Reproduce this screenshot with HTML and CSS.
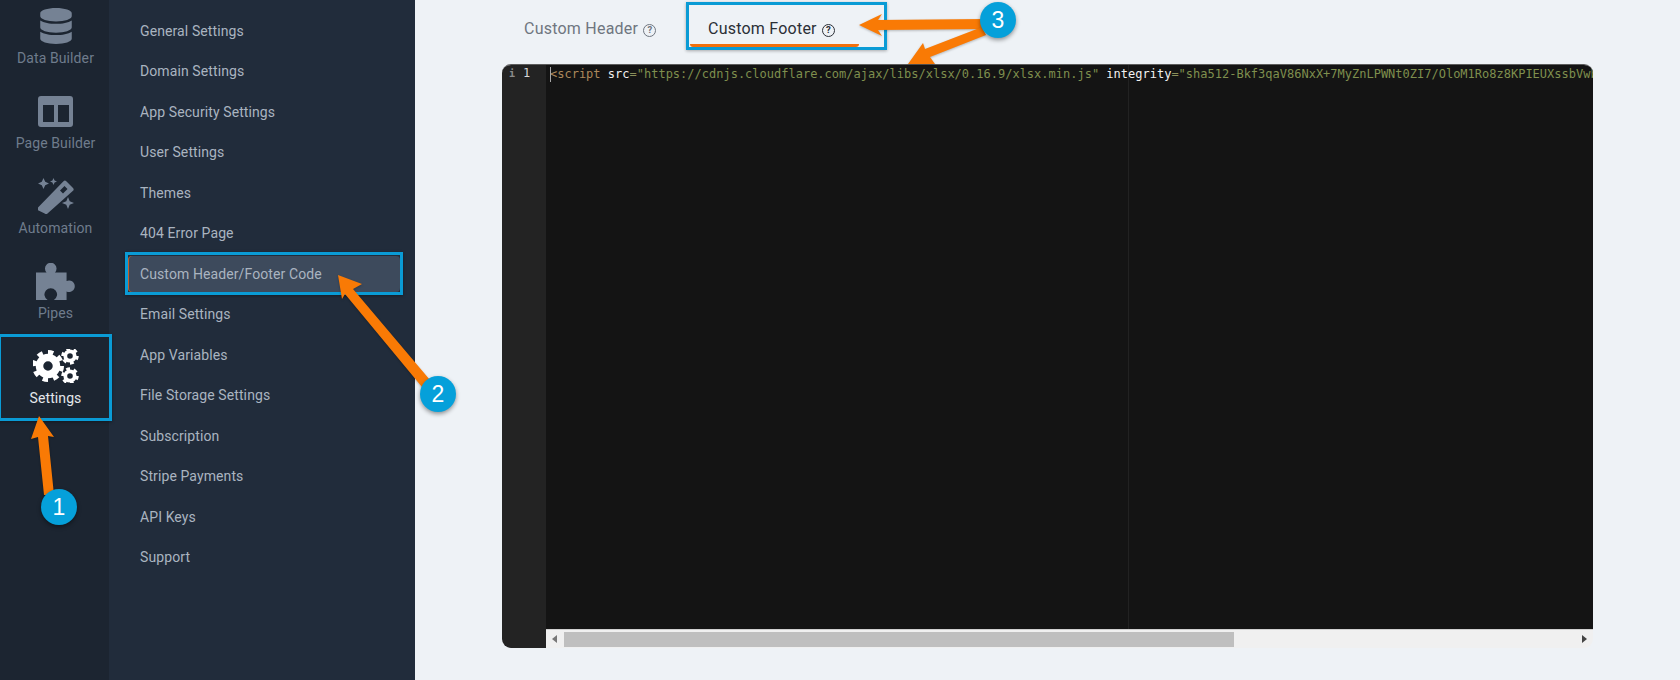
FILE: index.html
```html
<!DOCTYPE html>
<html lang="en">
<head>
<meta charset="utf-8">
<title>Custom Header/Footer Code</title>
<link rel="stylesheet" href="styles.css">
</head>
<body>
<div class="app">
  <nav class="rail">
    <div class="rail-item">
      <div class="rail-icon">
        <svg class="ic-data" viewBox="0 0 448 512"><path d="M448 73.143v45.714C448 159.143 347.667 192 224 192S0 159.143 0 118.857V73.143C0 32.857 100.333 0 224 0s224 32.857 224 73.143zM448 176v102.857C448 319.143 347.667 352 224 352S0 319.143 0 278.857V176c48.125 33.143 136.208 48.572 224 48.572S399.874 209.143 448 176zm0 160v102.857C448 479.143 347.667 512 224 512S0 479.143 0 438.857V336c48.125 33.143 136.208 48.572 224 48.572S399.874 369.143 448 336z"/></svg>
      </div>
      <span class="rail-label">Data Builder</span>
    </div>
    <div class="rail-item">
      <div class="rail-icon">
        <svg class="ic-cols" viewBox="0 0 35 31"><path fill-rule="evenodd" d="M3 0H32A3 3 0 0 1 35 3V28A3 3 0 0 1 32 31H3A3 3 0 0 1 0 28V3A3 3 0 0 1 3 0ZM5 9V26H16V9ZM20 9V26H31V9Z"/></svg>
      </div>
      <span class="rail-label">Page Builder</span>
    </div>
    <div class="rail-item">
      <div class="rail-icon">
        <svg class="ic-wand" viewBox="0 0 36 36"><path fill-rule="evenodd" d="M0 29.500 25.500 3.200a2 2 0 0 1 2.800 0L35 10a2 2 0 0 1 0 2.800L9.500 35.500a2 2 0 0 1-2.800 0L0 32.300a2 2 0 0 1 0-2.800ZM22 12.500 25 15.500 29.500 11 26.500 8Z"/><path d="M5.500 0 7.200 3.800 11 5.500 7.200 7.200 5.500 11 3.800 7.200 0 5.500 3.800 3.800ZM15.500 0 16.600 2.400 19 3.500 16.600 4.600 15.500 7 14.400 4.600 12 3.500 14.400 2.400ZM30 19 31.700 23.300 36 25 31.700 26.700 30 31 28.300 26.700 24 25 28.300 23.300Z"/></svg>
      </div>
      <span class="rail-label">Automation</span>
    </div>
    <div class="rail-item">
      <div class="rail-icon">
        <svg class="ic-puzzle" viewBox="0 0 37 35"><path d="M0 9H10A5.500 5.500 0 1 1 18 9H29V17A5.500 5.500 0 1 1 29 27V35H17A6 6 0 1 0 11 35H0Z"/></svg>
      </div>
      <span class="rail-label">Pipes</span>
    </div>
    <div class="rail-item rail-active">
      <div class="rail-icon">
        <svg class="ic-cogs" viewBox="0 0 46 34">
          <circle class="gear-teeth" cx="15" cy="17" r="13.500" pathLength="48"/>
          <circle class="gear-ring" cx="15" cy="17" r="8.500"/>
          <circle class="gear-teeth-s" cx="37" cy="7" r="7" pathLength="48"/>
          <circle class="gear-ring-s" cx="37" cy="7" r="4.700"/>
          <circle class="gear-teeth-s" cx="37" cy="27" r="7" pathLength="48"/>
          <circle class="gear-ring-s" cx="37" cy="27" r="4.700"/>
        </svg>
      </div>
      <span class="rail-label">Settings</span>
    </div>
  </nav>

  <aside class="menu">
    <a class="menu-item">General Settings</a>
    <a class="menu-item">Domain Settings</a>
    <a class="menu-item">App Security Settings</a>
    <a class="menu-item">User Settings</a>
    <a class="menu-item">Themes</a>
    <a class="menu-item">404 Error Page</a>
    <a class="menu-item menu-active">Custom Header/Footer Code</a>
    <a class="menu-item">Email Settings</a>
    <a class="menu-item">App Variables</a>
    <a class="menu-item">File Storage Settings</a>
    <a class="menu-item">Subscription</a>
    <a class="menu-item">Stripe Payments</a>
    <a class="menu-item">API Keys</a>
    <a class="menu-item">Support</a>
  </aside>

  <main class="main">
    <div class="tabs">
      <div class="tab">Custom Header <span class="help">?</span></div>
      <div class="tab tab-active">Custom Footer <span class="help">?</span></div>
    </div>
    <div class="editor">
      <div class="gutter">
        <span class="info">i</span><span class="line-no">1</span>
      </div>
      <div class="code-wrap">
        <div class="code-area">
          <div class="print-margin"></div>
          <div class="code"><span class="cursor"></span><span class="tk-tag">&lt;script</span> <span class="tk-attr">src</span><span class="tk-eq">=</span><span class="tk-str">"https://cdnjs.cloudflare.com/ajax/libs/xlsx/0.16.9/xlsx.min.js"</span> <span class="tk-attr">integrity</span><span class="tk-eq">=</span><span class="tk-str">"sha512-Bkf3qaV86NxX+7MyZnLPWNt0ZI7/OloM1Ro8z8KPIEUXssbVwb</span></div>
        </div>
        <div class="hscroll">
          <span class="arrow-left"></span>
          <div class="thumb"></div>
          <span class="arrow-right"></span>
        </div>
      </div>
    </div>
  </main>

  <svg class="notes" viewBox="0 0 1680 680" width="1680" height="680">
    <g class="arrow">
      <polygon points="39,416 54,437 48,436 54,495 44,495 38,437 31,439"/>
      <polygon points="338,275 362,284 353,289 430,380 422,387 345,294 342,299"/>
      <polygon points="859,25 882,14 878,20 985,19 985,29 878,30 882,36"/>
      <polygon points="908,64 923,43 925,49 982,27 986,35 930,57 935,64"/>
    </g>
    <g class="badge">
      <circle cx="59" cy="507" r="18"/>
      <text x="59" y="515">1</text>
    </g>
    <g class="badge">
      <circle cx="438" cy="394" r="18"/>
      <text x="438" y="402">2</text>
    </g>
    <g class="badge">
      <circle cx="998" cy="20" r="18"/>
      <text x="998" y="28">3</text>
    </g>
  </svg>
</div>
</body>
</html>
```
FILE: styles.css
```css
*, *::before, *::after { box-sizing: border-box; }
html, body { margin: 0; padding: 0; }
body {
  width: 1680px;
  height: 680px;
  overflow: hidden;
  font-family: Roboto, "Liberation Sans", sans-serif;
  background: #eef2f6;
}
.app {
  position: relative;
  display: flex;
  width: 1680px;
  height: 680px;
  overflow: hidden;
}

/* icon rail */
.rail {
  flex: 0 0 109px;
  background: #1c2531;
  margin-top: -3px;
  height: 683px;
}
.rail-item {
  position: relative;
  height: 85px;
  padding: 9px 0 0 2px;
  display: flex;
  flex-direction: column;
  align-items: center;
  color: #6f7c8c;
}
.rail-icon {
  height: 40px;
  margin-bottom: 4px;
  display: flex;
  align-items: center;
  justify-content: center;
}
.rail-icon svg { display: block; fill: #758294; }
.rail-label { font-size: 14px; line-height: 16px; letter-spacing: 0.1px; }
.ic-data { width: 32px; height: 36px; }
.ic-cols { width: 35px; height: 31px; }
.ic-wand { width: 36px; height: 36px; }
.ic-puzzle { width: 39px; height: 37px; }
.ic-cogs { width: 46px; height: 34px; }

.rail-active { color: #e4e7eb; }
.rail-active::after {
  content: "";
  position: absolute;
  left: -2px;
  top: -3px;
  width: 114px;
  height: 87px;
  border: 3px solid #0a9bd5;
  box-shadow: 0 1px 3px rgba(0, 0, 0, .35);
}
.gear-teeth { fill: none; stroke: #fff; stroke-width: 5; stroke-dasharray: 3 3; }
.gear-ring { fill: none; stroke: #fff; stroke-width: 7.500; }
.gear-teeth-s { fill: none; stroke: #fff; stroke-width: 3.500; stroke-dasharray: 4 4; }
.gear-ring-s { fill: none; stroke: #fff; stroke-width: 3.800; }

/* settings menu */
.menu {
  flex: 0 0 306px;
  background: #212c3b;
  padding-top: 12.500px;
  display: flex;
  flex-direction: column;
  gap: 4px;
}
.menu-item {
  position: relative;
  display: block;
  height: 36.500px;
  line-height: 36.500px;
  margin: 0 15px 0 19px;
  padding-left: 12px;
  font-size: 14px;
  letter-spacing: 0.1px;
  color: #aab4c0;
}
.menu-active {
  background: #3d4a5c;
  border-radius: 4px;
  box-shadow: inset 1px 0 0 #c4622a;
}
.menu-active::after {
  content: "";
  position: absolute;
  left: -3px;
  right: -3px;
  top: -4px;
  bottom: -3px;
  border: 3px solid #0a9bd5;
  box-shadow: 0 1px 3px rgba(0, 0, 0, .35);
}

/* main */
.main {
  flex: 1;
  display: flex;
  flex-direction: column;
  padding-left: 87px;
}
.tabs {
  height: 64px;
  display: flex;
  padding-left: 22px;
}
.tab {
  position: relative;
  font-size: 16px;
  letter-spacing: 0.23px;
  color: #6f7680;
  height: 47px;
  line-height: 58px;
  white-space: nowrap;
  width: 166px;
}
.tab-active {
  color: #2b2f36;
  padding-left: 18px;
  width: 169px;
  border-bottom: 3px solid #f2700c;
  border-radius: 0 0 3px 3px;
}
.tab-active::after {
  content: "";
  position: absolute;
  left: -4px;
  top: 2px;
  width: 201px;
  height: 48px;
  border: 3px solid #0a9bd5;
  box-shadow: 0 1px 3px rgba(0, 0, 0, .3);
}
.help {
  display: inline-block;
  width: 13px;
  height: 13px;
  margin-left: 1px;
  border: 1.500px solid currentColor;
  border-radius: 50%;
  font-size: 9.500px;
  font-weight: 700;
  line-height: 10px;
  letter-spacing: 0;
  text-align: center;
  vertical-align: 1px;
}

/* editor */
.editor {
  width: 1091px;
  height: 584px;
  display: flex;
  border-radius: 9px;
  overflow: hidden;
  border-top: 1px solid #5c5c5c;
}
.gutter {
  flex: 0 0 44px;
  background: #232323;
  display: flex;
  align-items: flex-start;
  padding-top: 1px;
  font-family: "DejaVu Sans Mono", monospace;
  font-size: 12px;
  line-height: 15px;
  color: #d8d8d8;
}
.info {
  width: 12px;
  margin-left: 4px;
  color: #8b8b8b;
  font-weight: 700;
  font-size: 10px;
  text-align: center;
}
.line-no { margin-left: 5px; }
.code-wrap {
  flex: 1;
  min-width: 0;
  display: flex;
  flex-direction: column;
}
.code-area {
  position: relative;
  flex: 1;
  background: #141414;
  overflow: hidden;
  border-bottom: 1px solid #d0d0d0;
}
.print-margin {
  position: absolute;
  left: 582px;
  top: 0;
  bottom: 0;
  width: 1px;
  background: #222;
}
.code {
  position: relative;
  padding: 2px 0 0 4px;
  font-family: "DejaVu Sans Mono", monospace;
  font-size: 12px;
  line-height: 15px;
  white-space: pre;
  color: #d8d8d8;
}
.cursor {
  position: absolute;
  left: 4px;
  top: 2px;
  width: 1px;
  height: 15px;
  background: #a7a7a7;
}
.tk-tag { color: #ac885b; }
.tk-attr { color: #f1f1f1; }
.tk-eq { color: #8a8f5a; }
.tk-str { color: #7f8f4e; }

.hscroll {
  flex: 0 0 18px;
  background: #f0f0f0;
  display: flex;
  align-items: center;
  position: relative;
}
.thumb {
  position: absolute;
  left: 18px;
  top: 2px;
  width: 670px;
  height: 15px;
  background: #bfbfbf;
}
.arrow-left, .arrow-right {
  position: absolute;
  top: 5px;
  width: 0;
  height: 0;
  border-top: 4px solid transparent;
  border-bottom: 4px solid transparent;
}
.arrow-left { left: 6px; border-right: 5px solid #777; }
.arrow-right { right: 6px; border-left: 5px solid #444; }

/* annotations */
.notes {
  position: absolute;
  left: 0;
  top: 0;
  pointer-events: none;
}
.arrow polygon { fill: #f97a05; filter: drop-shadow(0 1px 1px rgba(0, 0, 0, .25)); }
.badge circle { fill: #05a0da; filter: drop-shadow(0 2px 2px rgba(0, 0, 0, .4)); }
.badge text {
  fill: #fff;
  font-family: "Liberation Sans", sans-serif;
  font-size: 23px;
  text-anchor: middle;
}
```
